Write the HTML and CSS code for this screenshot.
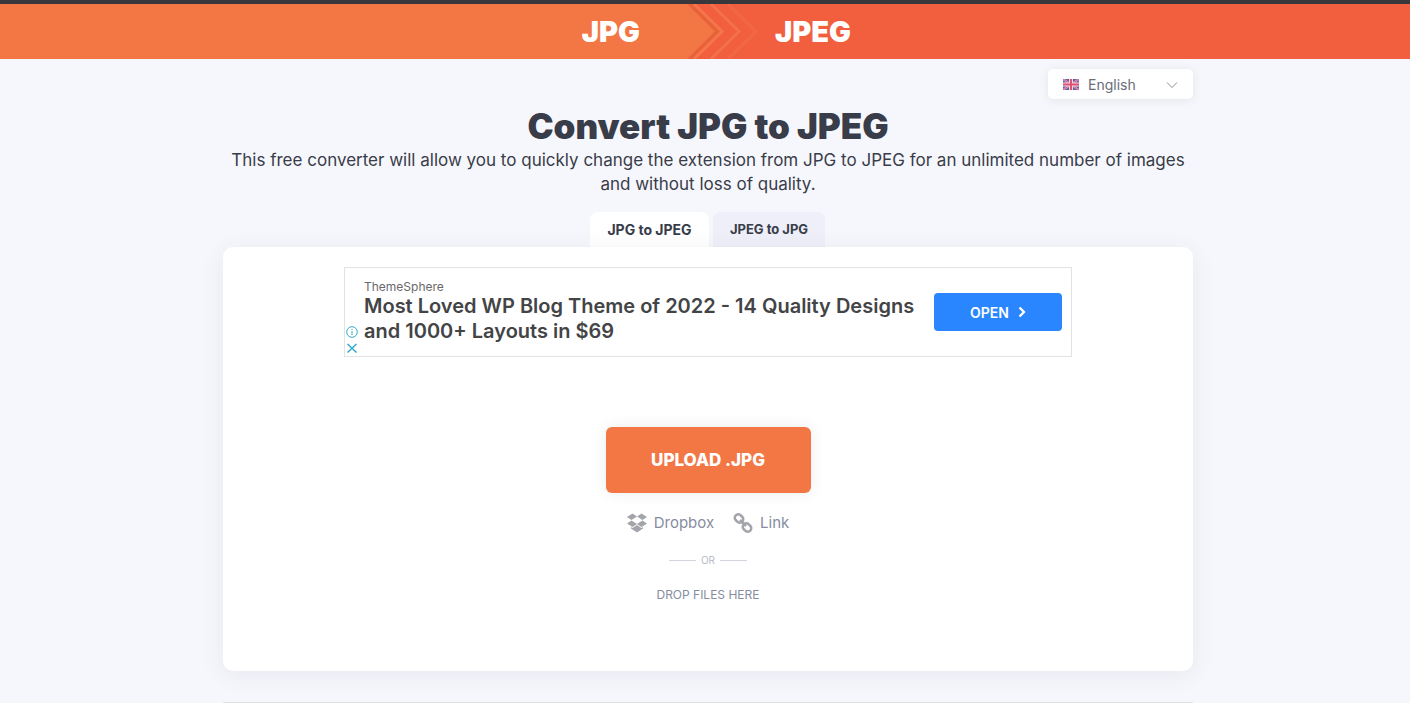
FILE: index.html
```html
<!DOCTYPE html>
<html lang="en">
<head>
<meta charset="utf-8">
<meta name="viewport" content="width=device-width, initial-scale=1">
<title>Convert JPG to JPEG</title>
<link rel="stylesheet" href="styles.css">
</head>
<body>
<header class="banner">
  <div class="from">JPG</div>
  <svg class="arrows" viewBox="0 0 70 55" preserveAspectRatio="none" aria-hidden="true">
    <path fill="#f37745" d="M0 0L29 27.500L0 55Z"/>
    <g fill="none" stroke-width="3">
      <path stroke="#e96139" d="M1 0L29 27.500L1 55"/>
      <path stroke="#f3774b" d="M6 0L34 27.500L6 55"/>
      <path stroke="#f3714a" d="M23 0L51 27.500L23 55"/>
      <path stroke="#f26846" d="M40 0L68 27.500L40 55"/>
    </g>
  </svg>
  <div class="to">JPEG</div>
</header>
<main class="page">
  <div class="language">
    <svg class="flag" viewBox="0 0 16 11" aria-hidden="true">
      <path fill="#625f96" d="M0 0H16V11H0Z"/>
      <path stroke="#dba9cd" stroke-width="2" d="M0 0L16 11M16 0L0 11"/>
      <path stroke="#c8608f" stroke-width="1" d="M0 0L16 11M16 0L0 11"/>
      <path stroke="#f3d5e4" stroke-width="4" d="M8 0V11M0 5.500H16"/>
      <path stroke="#df5272" stroke-width="2" d="M8 0V11M0 5.500H16"/>
    </svg>
    <select class="language-select" aria-label="Language"><option>English</option></select>
    <svg class="caret" viewBox="0 0 12 8" aria-hidden="true"><path d="M1 1.500L6 6.500L11 1.500" fill="none" stroke="#8b8d96" stroke-width="1"/></svg>
  </div>
  <h1 class="title">Convert JPG to JPEG</h1>
  <p class="intro">This free converter will allow you to quickly change the extension from JPG to JPEG for an unlimited number of images and without loss of quality.</p>
  <nav class="tabs">
    <a class="tab tab-active" href="#jpeg">JPG to JPEG</a>
    <a class="tab" href="#jpg">JPEG to JPG</a>
  </nav>
  <section class="card">
    <aside class="ad">
      <div class="ad-marks">
        <button class="mark" aria-label="About this ad"><svg viewBox="0 0 12 12"><circle cx="6" cy="6" r="5.300"/><path d="M6 5V9M6 2.800V4"/></svg></button>
        <button class="mark" aria-label="Close ad"><svg viewBox="0 0 12 12"><path stroke-width="1.500" d="M1.500 2L10.500 10.500M10.500 2L1.500 10.500"/></svg></button>
      </div>
      <div class="ad-copy">
        <div class="ad-brand">ThemeSphere</div>
        <div class="ad-headline">Most Loved WP Blog Theme of 2022 - 14 Quality Designs and 1000+ Layouts in $69</div>
      </div>
      <a class="ad-open" href="#open">OPEN <svg class="ad-chevron" viewBox="0 0 8 12" aria-hidden="true"><path d="M1.500 1.500L6 6L1.500 10.500" fill="none" stroke="#fff" stroke-width="2.300"/></svg></a>
    </aside>
    <button class="upload">UPLOAD .JPG</button>
    <div class="sources">
      <button class="source"><svg class="source-icon" viewBox="0 0 20 20" aria-hidden="true"><path fill="#a3a5aa" d="M5.500 0.500L10 3.500L4.500 7L0 4ZM14.500 0.500L20 4L15.500 7L10 3.500ZM4.500 7.500L10 11L5.500 14L0 10.500ZM15.500 7.500L20 10.500L14.500 14L10 11ZM10 12L14.500 15L16 14V15.500L10 19.500L4 15.500V14L5.500 15Z"/></svg>Dropbox</button>
      <button class="source"><svg class="source-icon" viewBox="0 0 20 20" aria-hidden="true"><g fill="none" stroke="#a3a5aa" stroke-width="2.600"><rect x="1.500" y="2" width="9" height="7" rx="3.500" transform="rotate(45 6 5.500)"/><rect x="9.500" y="11" width="9" height="7" rx="3.500" transform="rotate(45 14 14.500)"/><path d="M7 7L13 13"/></g></svg>Link</button>
    </div>
    <div class="divider">OR</div>
    <div class="drop">DROP FILES HERE</div>
  </section>
  <hr class="rule">
</main>
</body>
</html>
```
FILE: styles.css
```css
* { box-sizing: border-box; }
body {
  margin: 0;
  background: #f6f7fc;
  color: #393c49;
  font-family: Inter, "Open Sans", sans-serif;
}
button { border: 0; font-family: inherit; cursor: pointer; }
a { text-decoration: none; }
.banner {
  display: grid;
  grid-template-columns: calc(50% - 17px) 70px 1fr;
  align-items: center;
  height: 59px;
  border-top: 4px solid #38383c;
  background: #f15f3f;
  color: #fff;
  font-size: 29px;
  font-weight: 900;
  line-height: 55px;
}
.from { padding-right: 48px; background: #f37745; text-align: right; }
.arrows { display: block; width: 100%; height: 55px; }
.to { padding-left: 17px; }
.page {
  display: flex;
  flex-direction: column;
  width: 100%;
  max-width: 976px;
  margin: 0 auto;
  padding: 10px 0 0 6px;
}
.language {
  position: relative;
  align-self: flex-end;
  width: 145px;
  height: 30px;
  border-radius: 5px;
  background: #fff;
  box-shadow: 0 1px 10px rgba(60, 65, 90, 0.1);
}
.language-select {
  width: 100%;
  height: 100%;
  padding: 0 0 0 40px;
  border: 0;
  border-radius: 5px;
  background: transparent;
  color: #696c79;
  font: 14px Inter, sans-serif;
  appearance: none;
}
.flag { position: absolute; top: 10px; left: 15px; width: 16px; height: 11px; }
.caret { position: absolute; top: 12px; right: 15px; width: 12px; height: 8px; pointer-events: none; }
.title {
  margin: 7px 0 2px;
  font-size: 35px;
  font-weight: 900;
  line-height: 40px;
  text-align: center;
}
.intro {
  margin: 0;
  padding: 0 8px;
  font-size: 17px;
  line-height: 24px;
  text-align: center;
}
.tabs {
  display: flex;
  justify-content: center;
  gap: 4px;
  margin-top: 16px;
  padding-right: 1px;
}
.tab {
  width: 112px;
  height: 35px;
  border-radius: 8px 8px 0 0;
  background: #eeeff8;
  color: #393c49;
  font-size: 13px;
  font-weight: 700;
  line-height: 34px;
  text-align: center;
}
.tab-active { width: 119px; background: #fff; font-size: 14px; line-height: 35px; }
.card {
  display: flex;
  flex-direction: column;
  align-items: center;
  padding: 20px 20px 68px;
  border-radius: 10px;
  background: #fff;
  box-shadow: 0 4px 24px rgba(60, 65, 90, 0.08);
}
.ad {
  display: flex;
  align-items: center;
  width: 100%;
  max-width: 728px;
  height: 90px;
  padding-right: 9px;
  border: 1px solid #e2e2e4;
}
.ad-marks {
  display: flex;
  flex-direction: column;
  align-self: flex-end;
  gap: 4px;
  width: 19px;
  padding: 0 0 2px 1px;
}
.mark { width: 12px; height: 12px; padding: 0; background: transparent; }
.mark svg { display: block; width: 12px; height: 12px; fill: none; stroke: #36aacb; }
.ad-copy { flex: 1; }
.ad-brand { color: #68696b; font-size: 12px; line-height: 14px; }
.ad-headline { color: #434446; font-size: 20px; font-weight: 600; line-height: 25px; }
.ad-open {
  display: flex;
  align-items: center;
  justify-content: center;
  gap: 9px;
  width: 128px;
  height: 38px;
  border-radius: 4px;
  background: #2a86ff;
  color: #fff;
  font-size: 14px;
  font-weight: 600;
}
.ad-chevron { width: 8px; height: 12px; }
.upload {
  width: 205px;
  height: 66px;
  margin-top: 70px;
  border-radius: 6px;
  background: #f37745;
  color: #fff;
  font-size: 17px;
  font-weight: 800;
  box-shadow: 0 0 14px rgba(60, 65, 90, 0.1);
}
.sources { display: flex; gap: 19px; margin-top: 20px; }
.source {
  display: flex;
  align-items: center;
  gap: 7px;
  padding: 0;
  background: transparent;
  color: #868d9f;
  font-size: 15px;
  line-height: 20px;
}
.source-icon { width: 20px; height: 20px; }
.divider {
  display: flex;
  align-items: center;
  gap: 5px;
  margin-top: 20px;
  color: #b5b9c5;
  font-size: 10px;
  line-height: 14px;
}
.divider::before, .divider::after { width: 27px; height: 1px; background: #d2d5de; content: ""; }
.drop { margin-top: 20px; color: #868d9f; font-size: 12px; line-height: 16px; }
.rule { width: 100%; height: 1px; margin: 31px 0 0; border: 0; background: #dfe1e6; }
```
